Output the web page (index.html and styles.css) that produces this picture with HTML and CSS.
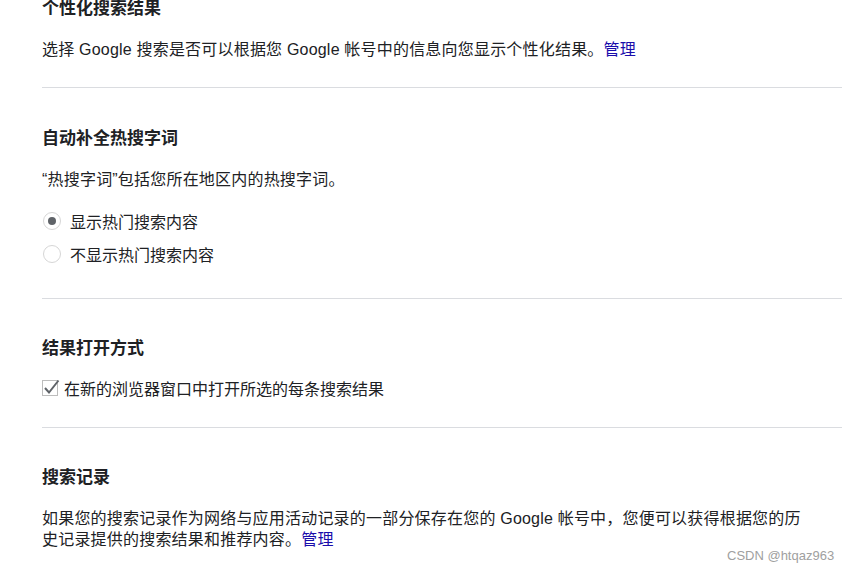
FILE: index.html
```html
<!DOCTYPE html>
<html lang="zh-CN">
<head>
<meta charset="utf-8">
<title>搜索设置</title>
<link rel="stylesheet" href="styles.css">
</head>
<body>
<main class="page">
  <section class="section first">
    <h2 class="title">个性化搜索结果</h2>
    <p class="text">选择 Google 搜索是否可以根据您 Google 帐号中的信息向您显示个性化结果。<a class="link" href="#">管理</a></p>
  </section>
  <section class="section">
    <h2 class="title">自动补全热搜字词</h2>
    <p class="text">“热搜字词”包括您所在地区内的热搜字词。</p>
    <div class="radios">
      <label class="radio-row"><span class="radio checked"></span><span>显示热门搜索内容</span></label>
      <label class="radio-row"><span class="radio"></span><span>不显示热门搜索内容</span></label>
    </div>
  </section>
  <section class="section check-section">
    <h2 class="title">结果打开方式</h2>
    <label class="check-row">
      <svg class="checkbox" width="18" height="18" viewBox="0 0 18 18"><rect x="0.5" y="1.5" width="15" height="15" fill="#fff" stroke="#bdbdbd"/><polyline points="3,9 7,13.5 16.5,1.5" fill="none" stroke="#5f6368" stroke-width="2"/></svg>
      <span>在新的浏览器窗口中打开所选的每条搜索结果</span>
    </label>
  </section>
  <section class="section last">
    <h2 class="title">搜索记录</h2>
    <p class="text">如果您的搜索记录作为网络与应用活动记录的一部分保存在您的 Google 帐号中，您便可以获得根据您的历史记录提供的搜索结果和推荐内容。<a class="link" href="#">管理</a></p>
  </section>
</main>
<div class="watermark">CSDN @htqaz963</div>
</body>
</html>
```
FILE: styles.css
```css
html, body {
  margin: 0;
  padding: 0;
  background: #fff;
  overflow: hidden;
}
body {
  font-family: "Liberation Sans", Arial, "Noto Sans CJK SC", sans-serif;
  color: #202124;
  width: 850px;
  height: 573px;
  position: relative;
}
.page {
  padding-left: 42px;
  width: 800px;
}
.section {
  padding: 38px 0 28px;
  border-bottom: 1px solid #dadce0;
}
.section.first {
  padding-top: 0;
  padding-bottom: 27px;
  margin-top: -3px;
}
.section:nth-child(2) {
  padding-top: 39px;
}
.section.check-section {
  padding-bottom: 30px;
}
.section.last {
  border-bottom: none;
}
.title {
  margin: 0 0 18px;
  font-size: 17px;
  line-height: 24px;
  font-weight: bold;
  color: #202124;
}
.text {
  margin: 0;
  font-size: 16px;
  line-height: 21px;
  letter-spacing: 0.2px;
  max-width: 770px;
}
.link {
  color: #1a0dab;
  text-decoration: none;
}
.radios {
  margin-top: 14px;
  display: flex;
  flex-direction: column;
}
.radio-row {
  display: flex;
  align-items: center;
  height: 33px;
  font-size: 16px;
  gap: 9px;
  padding-left: 1px;
}
.radio {
  box-sizing: border-box;
  width: 18px;
  height: 18px;
  border-radius: 50%;
  border: 1px solid #d6d6d6;
  background: #fff;
  display: flex;
  align-items: center;
  justify-content: center;
}
.radio.checked::after {
  content: "";
  width: 8px;
  height: 8px;
  border-radius: 50%;
  background: #5f6368;
}
.check-row {
  display: flex;
  align-items: center;
  height: 18px;
  font-size: 16px;
  gap: 4px;
}
.checkbox {
  display: block;
  flex: none;
}
.watermark {
  position: absolute;
  left: 727px;
  top: 548px;
  font-size: 13px;
  line-height: 16px;
  color: #a0a0a0;
  font-family: "Liberation Sans", Arial, sans-serif;
}
```
